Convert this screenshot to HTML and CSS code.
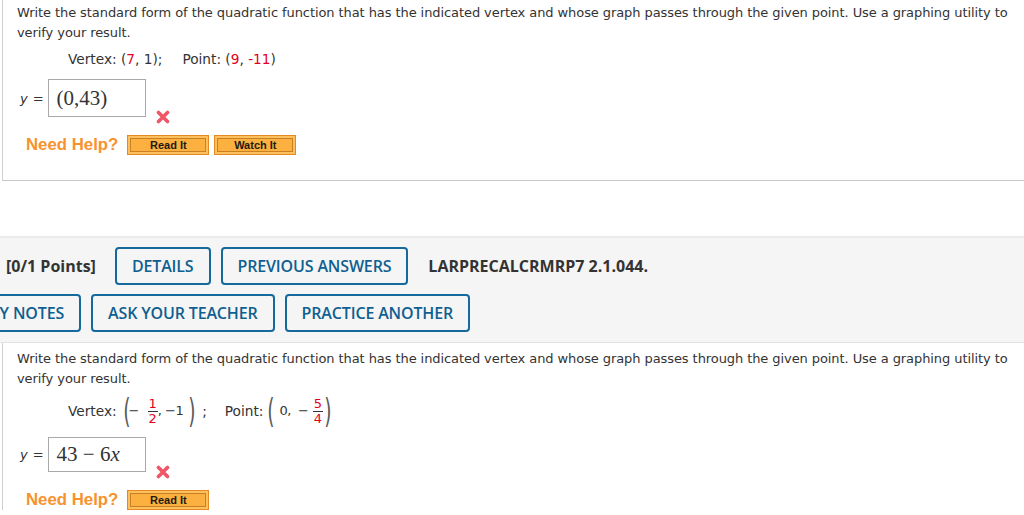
FILE: index.html
```html
<!DOCTYPE html>
<html>
<head>
<meta charset="utf-8">
<link rel="stylesheet" href="styles.css">
</head>
<body>
<div class="panel top-panel">
  <p class="q">Write the standard form of the quadratic function that has the indicated vertex and whose graph passes through the given point. Use a graphing utility to verify your result.</p>
  <div class="given">Vertex: (<span class="red">7</span>, 1);<span class="sp"></span>Point: (<span class="red">9</span>, <span class="red">-11</span>)</div>
  <div class="answer-row">
    <span class="yeq">y</span><span class="eq">=</span>
    <div class="box tall"><span class="math">(0,43)</span></div>
    <svg class="xmark" width="14" height="14" viewBox="0 0 14 14"><path d="M2.5 2.5 L11.5 11.5 M11.5 2.5 L2.5 11.5" stroke="#ef5666" stroke-width="3.6" stroke-linecap="round"/></svg>
  </div>
  <div class="help">
    <span class="need">Need Help?</span>
    <span class="obtn">Read It</span>
    <span class="obtn">Watch It</span>
  </div>
</div>

<div class="bar">
  <div class="bar-row">
    <span class="pts">[0/1 Points]</span>
    <span class="bbtn">DETAILS</span>
    <span class="bbtn">PREVIOUS ANSWERS</span>
    <span class="code">LARPRECALCRMRP7 2.1.044.</span>
  </div>
  <div class="bar-row second">
    <span class="bbtn">MY NOTES</span>
    <span class="bbtn">ASK YOUR TEACHER</span>
    <span class="bbtn">PRACTICE ANOTHER</span>
  </div>
</div>

<div class="panel bottom-panel">
  <p class="q">Write the standard form of the quadratic function that has the indicated vertex and whose graph passes through the given point. Use a graphing utility to verify your result.</p>
  <div class="given frac-line">
    <span class="lbl">Vertex:</span>
    <span class="paren">(</span><span class="mop">−</span><span class="frac"><span class="num red">1</span><span class="den red">2</span></span><span class="mono">, −1</span><span class="paren close1">)</span><span class="semi">;</span>
    <span class="lbl pt">Point:</span>
    <span class="paren">(</span><span class="mono zero">0,</span><span class="mop wide">−</span><span class="frac"><span class="num red">5</span><span class="den red">4</span></span><span class="paren close2">)</span>
  </div>
  <div class="answer-row">
    <span class="yeq">y</span><span class="eq">=</span>
    <div class="box short"><span class="math">43 − 6<i>x</i></span></div>
    <svg class="xmark" width="14" height="14" viewBox="0 0 14 14"><path d="M2.5 2.5 L11.5 11.5 M11.5 2.5 L2.5 11.5" stroke="#ef5666" stroke-width="3.6" stroke-linecap="round"/></svg>
  </div>
  <div class="help">
    <span class="need">Need Help?</span>
    <span class="obtn">Read It</span>
  </div>
</div>
</body>
</html>
```
FILE: styles.css
```css
html, body {
  margin: 0;
  padding: 0;
  background: #fff;
  overflow: hidden;
}
body {
  width: 1024px;
  height: 515px;
  font-family: "DejaVu Sans", Verdana, sans-serif;
  color: #333;
}
.panel {
  margin-left: 2px;
  border-left: 1px solid #cfcfcf;
  padding-left: 14px;
}
.top-panel {
  border-bottom: 1px solid #c8c8c8;
  padding-top: 3px;
  height: 181px;
  box-sizing: border-box;
}
.bottom-panel {
  padding-top: 6px;
}
.q {
  margin: 0;
  font-size: 13px;
  line-height: 20px;
  letter-spacing: -0.08px;
  padding-right: 8px;
}
.given {
  font-size: 13.7px;
  line-height: 20px;
  margin: 6px 0 0 51px;
}
.sp { display: inline-block; width: 20px; }
.red { color: #e4001b; }
.answer-row {
  display: flex;
  align-items: flex-end;
  margin-top: 10px;
}
.yeq {
  font-style: italic;
  font-size: 13px;
  margin-left: 3px;
  align-self: center;
}
.eq {
  font-size: 13px;
  margin-left: 5px;
  margin-right: 4px;
  align-self: center;
}
.box {
  width: 98px;
  box-sizing: border-box;
  border: 1px solid #a9a9a9;
  display: flex;
  align-items: center;
  padding-left: 8px;
}
.box.tall { height: 38px; }
.box.short { height: 35px; }
.math {
  font-family: "Liberation Serif", "DejaVu Serif", serif;
  font-size: 21px;
  color: #333;
}
.math i { font-style: italic; }
.xmark {
  margin-left: 10px;
  margin-bottom: -7px;
}
.help {
  display: flex;
  align-items: center;
  margin-top: 18px;
  margin-left: 9px;
}
.need {
  font-family: "Liberation Sans", Arial, sans-serif;
  font-weight: bold;
  font-size: 16.8px;
  color: #f7922d;
  margin-right: 9px;
}
.obtn {
  box-sizing: border-box;
  width: 82px;
  height: 20px;
  margin-right: 5px;
  border: 1px solid #e58a22;
  background: #fbb040;
  box-shadow: inset 0 0 0 2px #fcc15e, inset 0 0 0 3px #c98022;
  font-family: "Liberation Sans", Arial, sans-serif;
  font-weight: bold;
  font-size: 11px;
  color: #1f1a10;
  display: flex;
  align-items: center;
  justify-content: center;
}
.bar {
  margin-top: 55px;
  background: #f5f5f5;
  border-top: 2px solid #ebebeb;
  border-bottom: 1px solid #e2e2e2;
  padding: 9px 0 10px 6px;
  font-family: "Open Sans", sans-serif;
}
.bar-row {
  display: flex;
  align-items: center;
}
.bar-row.second {
  margin-top: 9px;
  margin-left: -38px;
}
.pts {
  font-weight: bold;
  font-size: 16px;
  color: #333;
  margin-right: 19px;
}
.bbtn {
  box-sizing: border-box;
  height: 38px;
  border: 2px solid #16699c;
  border-radius: 4px;
  padding: 0 15px;
  display: flex;
  align-items: center;
  font-size: 16px;
  font-weight: 600;
  letter-spacing: -0.15px;
  color: #0f5f91;
  margin-right: 10px;
}
.code {
  font-weight: bold;
  font-size: 16px;
  color: #333;
  margin-left: 10px;
}
.frac-line {
  display: flex;
  align-items: center;
  height: 32px;
  margin-top: 6px;
}
.lbl { font-size: 13.7px; margin-right: 6px; }
.lbl.pt { margin-left: 18px; margin-right: 4px; }
.paren {
  display: inline-flex;
  justify-content: center;
  width: 8px;
  min-width: 0;
  flex: none;
  font-family: "DejaVu Sans", sans-serif;
  font-size: 34px;
  color: #5a5a5a;
  line-height: 32px;
  transform: scaleX(0.55);
}
.close1 { margin-left: 5px; }
.close2 { margin-left: 1px; }
.mop { font-size: 13px; margin: 0 8px 0 -2px; }
.mop.wide { margin: 0 4px 0 7px; }
.mono { font-size: 13px; letter-spacing: -0.5px; }
.zero { margin-left: 4px; }
.semi { font-size: 13.7px; margin-left: 6px; }
.frac {
  display: inline-flex;
  flex-direction: column;
  align-items: center;
  font-size: 13px;
  line-height: 12px;
}
.frac .num { border-bottom: 1px solid #333; padding: 0 1px 1px; }
.frac .den { padding-top: 1px; }
```
